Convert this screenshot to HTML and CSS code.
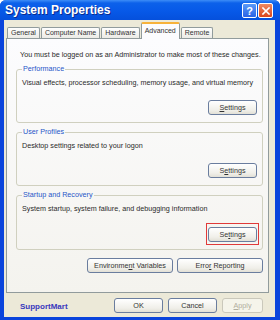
FILE: index.html
```html
<!DOCTYPE html>
<html lang="en">
<head>
    <meta charset="UTF-8">
    <title>System Properties</title>
    <link rel="stylesheet" href="styles.css">
</head>
<body>
    <div class="window">
        <!-- Barra de título -->
        <div class="titlebar">
            <span class="title">System Properties</span>
            <span class="cap-btns">
                <span class="cap-btn help">?</span>
                <span class="cap-btn close">
                    <svg width="8" height="8" viewBox="0 0 8 8"><path d="M1 1 L7 7 M7 1 L1 7" stroke="#fff" stroke-width="1.6" stroke-linecap="square"/></svg>
                </span>
            </span>
        </div>

        <div class="dialog">
            <div class="tabs">
                <span class="tab">General</span>
                <span class="tab">Computer Name</span>
                <span class="tab">Hardware</span>
                <span class="tab active">Advanced</span>
                <span class="tab">Remote</span>
            </div>

            <div class="panel">
                <p class="intro">You must be logged on as an Administrator to make most of these changes.</p>

                <fieldset class="group">
                    <legend>Performance</legend>
                    <p class="desc">Visual effects, processor scheduling, memory usage, and virtual memory</p>
                    <div class="actions"><button class="btn"><u>S</u>ettings</button></div>
                </fieldset>

                <fieldset class="group">
                    <legend>User Profiles</legend>
                    <p class="desc">Desktop settings related to your logon</p>
                    <div class="actions"><button class="btn">S<u>e</u>ttings</button></div>
                </fieldset>

                <fieldset class="group">
                    <legend>Startup and Recovery</legend>
                    <p class="desc">System startup, system failure, and debugging information</p>
                    <div class="actions">
                        <span class="highlight"><button class="btn">Se<u>t</u>tings</button></span>
                    </div>
                </fieldset>

                <div class="env-row">
                    <button class="btn wide">Environme<u>n</u>t Variables</button>
                    <button class="btn wide">Erro<u>r</u> Reporting</button>
                </div>
            </div>

            <div class="footer">
                <span class="brand">SupportMart</span>
                <button class="btn">OK</button>
                <button class="btn">Cancel</button>
                <button class="btn small" disabled><u>A</u>pply</button>
            </div>
        </div>
    </div>
</body>
</html>
```

FILE: styles.css
```css
body {
    margin: 0;
    padding: 0;
    background: #fff;
    font-family: "Liberation Sans", Arial, sans-serif;
}

.window {
    width: 280px;
    height: 320px;
    display: flex;
    flex-direction: column;
    background: #0a44dc;
    border-radius: 6px 6px 0 0;
    overflow: hidden;
}

/* Barra de título */
.titlebar {
    height: 20px;
    flex: none;
    display: flex;
    align-items: center;
    justify-content: space-between;
    padding: 0 7px 0 5px;
    background: linear-gradient(#3d8df7 0, #0c61ea 3px, #0759e8 55%, #0550dc 100%);
}

.title {
    color: #fff;
    font-weight: bold;
    font-size: 12px;
    text-shadow: 1px 1px 0 #0b2b8f;
}

.cap-btns {
    display: flex;
    gap: 1px;
    margin-top: 1px;
}

.cap-btn {
    width: 13px;
    height: 13px;
    border: 1px solid #fff;
    border-radius: 2px;
    display: flex;
    align-items: center;
    justify-content: center;
    color: #fff;
    font-weight: bold;
    font-size: 11px;
}

.help {
    background: linear-gradient(#5a9af8, #2a63e6);
}

.close {
    background: linear-gradient(#ee8a62, #d9461d);
}

/* Corpo do diálogo */
.dialog {
    flex: 1;
    margin: 0 5px 3px 4px;
    padding: 3px 6px 0 2px;
    background: #ece9d8;
    display: flex;
    flex-direction: column;
    font-size: 7.2px;
    color: #2a2a2a;
}

.tabs {
    display: flex;
    align-items: flex-end;
    gap: 1px;
    padding-left: 1px;
    height: 15px;
    font-size: 7px;
}

.tab {
    height: 10px;
    line-height: 10px;
    padding: 0 3px;
    border: 1px solid #919b9c;
    border-bottom: none;
    border-radius: 2px 2px 0 0;
    background: linear-gradient(#fefefe, #ecebe6);
    color: #333;
}

.tab.active {
    height: 15px;
    line-height: 14px;
    margin-bottom: -1px;
    position: relative;
    z-index: 1;
    border-top: 2px solid #f7b23a;
    background: #fcfcfe;
    padding: 0 3px;
}

.panel {
    height: 253px;
    border: 1px solid #919b9c;
    background: linear-gradient(#fcfcfe, #f4f3ee);
    padding: 0 5px 0 9px;
}

.intro {
    margin: 11px 0 6px 4px;
    line-height: 9px;
}

.group {
    margin: 0 0 5px 0;
    padding: 0 5px 7px 5px;
    border: 1px solid #d0d0bf;
    border-radius: 3px;
}

.group legend {
    padding: 0 1px;
    line-height: 8px;
    color: #1f56c8;
}

.desc {
    margin: 5px 0 13px 0;
    line-height: 9px;
}

.actions {
    display: flex;
    justify-content: flex-end;
}

.highlight {
    border: 1px solid #e03a3a;
    padding: 3px 1px 2px 1px;
    margin: -3px -2px -3px 0;
}

.btn {
    width: 49px;
    height: 15px;
    padding: 0;
    border: 1px solid #6a7d9e;
    border-radius: 3px;
    background: linear-gradient(#ffffff, #f0efe9 70%, #e2e0d6);
    font-family: "Liberation Sans", Arial, sans-serif;
    font-size: 7.2px;
    color: #333;
}

.btn u {
    text-decoration: underline;
}

.btn.wide {
    width: 86px;
}

.btn.small {
    width: 41px;
}

.btn:disabled {
    border-color: #cac8bb;
    background: #f5f4ea;
    color: #b0ad9e;
}

.env-row {
    display: flex;
    justify-content: flex-end;
    gap: 4px;
    margin-top: 8px;
}

.footer {
    display: flex;
    align-items: center;
    gap: 5px;
    height: 24px;
    padding-right: 6px;
}

.footer .brand {
    flex: 1;
    padding-left: 14px;
    color: #3838bd;
    font-weight: bold;
    font-size: 8px;
    margin-top: 2px;
}
```
